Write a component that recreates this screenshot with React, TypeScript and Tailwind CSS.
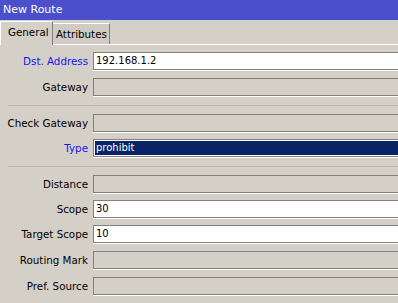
const font = { fontFamily: '"DejaVu Sans", Verdana, sans-serif' };

type FieldKind = 'text' | 'disabled' | 'selected';

interface RowProps {
  label: string;
  value?: string;
  kind: FieldKind;
  blue?: boolean;
  className?: string;
}

function Row({ label, value, kind, blue, className = '' }: RowProps) {
  return (
    <div className={`flex h-[18px] items-center ${className}`}>
      <div className="w-[88px] shrink-0 overflow-hidden">
        <div
          className={`w-[88px] whitespace-nowrap text-right text-[10.3px] leading-[18px] ${blue ? 'text-[#1414f0]' : 'text-black'}`}
        >
          {label}
        </div>
      </div>
      <div className="ml-[5px] h-[18px] flex-1 border border-r-0 border-[#808080] shadow-[0_1px_0_#ffffff]">
        {kind === 'text' && (
          <div className="h-full bg-white pl-[2px] text-[10px] leading-[16px] text-black">{value}</div>
        )}
        {kind === 'disabled' && <div className="h-full bg-[#d4d0c8]" />}
        {kind === 'selected' && (
          <div className="h-full bg-white p-px pr-0">
            <div className="h-full bg-[#082366] pl-px text-[10px] leading-[14px] text-white">{value}</div>
          </div>
        )}
      </div>
    </div>
  );
}

function Separator({ className = '' }: { className?: string }) {
  return <div className={`ml-[8px] h-px bg-[#bdb9b1] ${className}`} />;
}

export default function App() {
  return (
    <div className="h-[303px] w-[398px] overflow-hidden bg-[#d4d0c8]" style={font}>
      <div className="flex h-[20px] items-center bg-[#4b4fcc] pl-[3px] text-[11px] text-white">New Route</div>

      <div className="flex h-[25px] items-end border-b border-white">
        <div className="relative z-10 -mb-px flex h-[24px] w-[53px] items-start border-l border-t border-r border-l-white border-t-white border-r-[#808080] bg-[#d4d0c8] pl-[7px] pt-[3px] text-[10.3px] text-black">
          General
        </div>
        <div className="flex h-[21px] w-[57px] items-start border-t border-r border-t-white border-r-[#808080] bg-[#d0ccc4] pl-[3px] pt-[3px] text-[10.3px] text-black">
          Attributes
        </div>
      </div>

      <div className="flex flex-col pt-[7px]">
        <Row label="Dst. Address" value="192.168.1.2" kind="text" blue />
        <Row label="Gateway" kind="disabled" className="mt-[8px]" />
        <Separator className="mt-[9px]" />
        <Row label="Check Gateway" kind="disabled" className="mt-[8px]" />
        <Row label="Type" value="prohibit" kind="selected" blue className="mt-[7px]" />
        <Separator className="mt-[9px]" />
        <Row label="Distance" kind="disabled" className="mt-[8px]" />
        <Row label="Scope" value="30" kind="text" className="mt-[7px]" />
        <Row label="Target Scope" value="10" kind="text" className="mt-[7px]" />
        <Row label="Routing Mark" kind="disabled" className="mt-[8px]" />
        <Row label="Pref. Source" kind="disabled" className="mt-[8px]" />
      </div>
    </div>
  );
}
